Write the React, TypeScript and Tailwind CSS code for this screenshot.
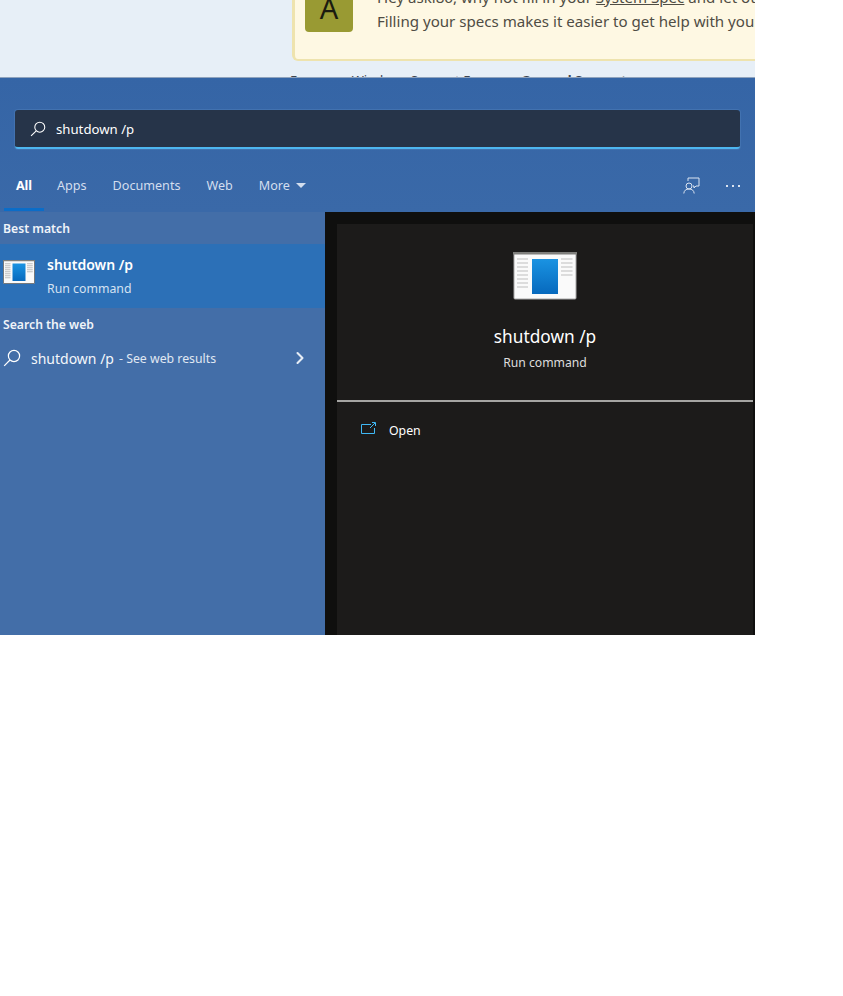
import { ChevronRight } from "lucide-react";

const tabs = ["Apps", "Documents", "Web"];

function SearchIcon({ className }: { className: string }) {
  return (
    <svg viewBox="0 0 18 18" fill="none" stroke="currentColor" strokeWidth="1.2" className={className}>
      <circle cx="11" cy="7" r="5.6" />
      <path d="M7 11 1.2 16.8" />
    </svg>
  );
}

function RunIcon({ className, small }: { className: string; small?: boolean }) {
  // window with a blue page and list lines either side
  const left = [6.5, 10.5, 14.5, 18.5, 22.5, 26.5, 30.5, 34.5];
  const right = [6.5, 10.5, 14.5, 18.5, 22.5];
  return (
    <svg viewBox="0 0 64 48" className={className}>
      <defs>
        <linearGradient id="page" x1="0" y1="0" x2="0" y2="1">
          <stop offset="0" stopColor="#1a93e2" />
          <stop offset="1" stopColor="#0769bd" />
        </linearGradient>
      </defs>
      <rect
        x="1"
        y="1"
        width="62"
        height="46"
        rx="1"
        fill="#fafafa"
        stroke={small ? "#74787c" : "#a8a8a8"}
        strokeWidth={small ? 2 : 1}
      />
      <rect x="0" y="0" width="64" height="2.5" fill="#7f7f7c" />
      <rect x="19" y="7" width="26" height="35" fill="url(#page)" />
      {left.map((y) => (
        <rect key={y} x="4" y={y} width="11" height={small ? 2 : 1} fill="#bdbdbd" />
      ))}
      {right.map((y) => (
        <rect key={y} x="48" y={y} width="11.5" height={small ? 2 : 1} fill="#bdbdbd" />
      ))}
    </svg>
  );
}

function ForumBanner() {
  return (
    <div className="h-[78px] shrink-0 overflow-hidden border-b border-[#8fa3bd] bg-[#e7eff7] pl-[292px] font-['Noto_Sans',sans-serif]">
      <div className="-mt-[20px] w-[600px]">
        <div className="flex h-[81px] gap-3 rounded-md border-2 border-r-0 border-l-[3px] border-[#eee3ae] bg-[#fef8e3] pl-[10px] pt-[2px]">
          <div className="flex h-[48px] w-[48px] shrink-0 items-center justify-center rounded-sm bg-[#999a33] text-[29px] text-[#1b1b10]">
            A
          </div>
          <div className="ml-3 mt-[1px] whitespace-nowrap text-[15.1px] leading-[24px] text-[#4f4d44]">
            <p>
              Hey aski86, why not fill in your <span className="underline">System Spec</span> and let others
            </p>
            <p>Filling your specs makes it easier to get help with your</p>
          </div>
        </div>
        <p className="mt-[10px] -ml-[2px] whitespace-nowrap text-[13px] text-[#3f4650]">
          Forums <span className="ml-[12px]">Windows Support Forums</span>{" "}
          <span className="ml-2 font-bold">General Support</span>
        </p>
      </div>
    </div>
  );
}

function SearchHeader() {
  return (
    <div className="h-[134px] shrink-0 bg-gradient-to-b from-[#3565a6] to-[#3a69a8]">
      <div className="px-[15px] pt-[32px]">
        <div className="flex h-[39px] items-center rounded-[3px] border-b-2 border-[#4db6f0] bg-[#263449] pl-[15px] shadow-[0_0_0_1px_#4272b0]">
          <SearchIcon className="mt-[1px] h-[16px] w-[16px] text-white" />
          <span className="ml-[10px] mt-[3px] text-[13.2px] text-white">shutdown /p</span>
        </div>
      </div>
      <div className="mt-[12px] flex h-[50px] items-center text-[12.6px] text-[#d3deee]">
        <div className="relative flex h-full w-[48px] items-center justify-center font-bold text-white">
          All
          <div className="absolute bottom-0 left-[4px] h-[3px] w-[40px] bg-[#0b6dc8]" />
        </div>
        <div className="ml-[9px] flex items-center gap-[26px]">
          {tabs.map((t) => (
            <span key={t}>{t}</span>
          ))}
          <span className="flex items-center gap-[6px]">
            More
            <span className="h-0 w-0 border-x-[5.5px] border-t-[5px] border-x-transparent border-t-[#d3deee]" />
          </span>
        </div>
        <div className="ml-auto mr-[15px] flex items-center gap-[26px]">
          <svg viewBox="0 0 17 17" fill="none" stroke="#dbe4f1" strokeWidth="1" className="-mt-[2px] h-[17px] w-[17px]">
            <path d="M5 4V1h11v8h-3l-2 2V9H10" />
            <circle cx="6" cy="9" r="3" />
            <path d="M.8 16.5C1 13.5 3 12 6 12s5 1.500 5.200 4.500" />
          </svg>
          <div className="flex gap-[4px]">
            <span className="h-[2px] w-[2px] bg-[#dbe4f1]" />
            <span className="h-[2px] w-[2px] bg-[#dbe4f1]" />
            <span className="h-[2px] w-[2px] bg-[#dbe4f1]" />
          </div>
        </div>
      </div>
    </div>
  );
}

function ResultList() {
  return (
    <div className="w-[325px] shrink-0 bg-[#436ea8] text-white">
      <div className="flex h-[32px] items-center pl-[3px] pt-[3px] text-[12.2px] font-semibold text-[#f0f4f9]">Best match</div>
      <div className="flex h-[64px] bg-[#2c70b7] pl-[3px]">
        <RunIcon small className="mt-[16px] h-[24px] w-[32px]" />
        <div className="ml-[12px] pt-[11px]">
          <p className="text-[14px] leading-[20px] font-semibold">shutdown /p</p>
          <p className="mt-[5px] text-[12.3px] leading-[18px] text-[#d5e2f2]">Run command</p>
        </div>
      </div>
      <div className="flex h-[32px] items-center pl-[3px] pt-[3px] text-[12.2px] font-semibold text-[#f0f4f9]">Search the web</div>
      <div className="flex h-[36px] items-center pl-[3px] pr-[15px]">
        <SearchIcon className="h-[18px] w-[18px] text-white" />
        <span className="ml-[10px] text-[14px] text-[#f4f7fb]">shutdown /p</span>
        <span className="ml-[5px] mt-[2px] text-[12.3px] text-[#e0e8f3]">- See web results</span>
        <ChevronRight className="ml-auto h-[20px] w-[20px] text-[#e6edf6]" strokeWidth={2.5} />
      </div>
    </div>
  );
}

function DetailPane() {
  return (
    <div className="flex-1 bg-[#0f0f0e] pl-[12px] pr-[2px] pt-[12px]">
      <div className="h-full bg-[#1c1b1a] text-white">
        <div className="flex h-[178px] flex-col items-center border-b-2 border-[#a5a5a3] pt-[28px]">
          <RunIcon className="h-[48px] w-[64px]" />
          <p className="mt-[25px] text-[17.3px] leading-[24px]">shutdown /p</p>
          <p className="mt-[5px] text-[12.2px] leading-[18px] text-[#dedede]">Run command</p>
        </div>
        <div className="flex items-center pl-[24px] pt-[20px]">
          <svg viewBox="0 0 15 12" fill="none" stroke="#3fb8f4" strokeWidth="1" className="-mt-[6px] h-[12px] w-[15px]">
            <path d="M10 2.500H.5v9h13V6" />
            <path d="M9 6l5-5M11 .5h3.500V4" />
          </svg>
          <span className="ml-[13px] text-[12.3px] leading-[18px]">Open</span>
        </div>
      </div>
    </div>
  );
}

export default function App() {
  return (
    <div className="h-[996px] bg-white">
      <div className="flex h-[635px] w-[755px] flex-col overflow-hidden font-['Noto_Sans',sans-serif]">
        <ForumBanner />
        <SearchHeader />
        <div className="flex min-h-0 flex-1">
          <ResultList />
          <DetailPane />
        </div>
      </div>
    </div>
  );
}
